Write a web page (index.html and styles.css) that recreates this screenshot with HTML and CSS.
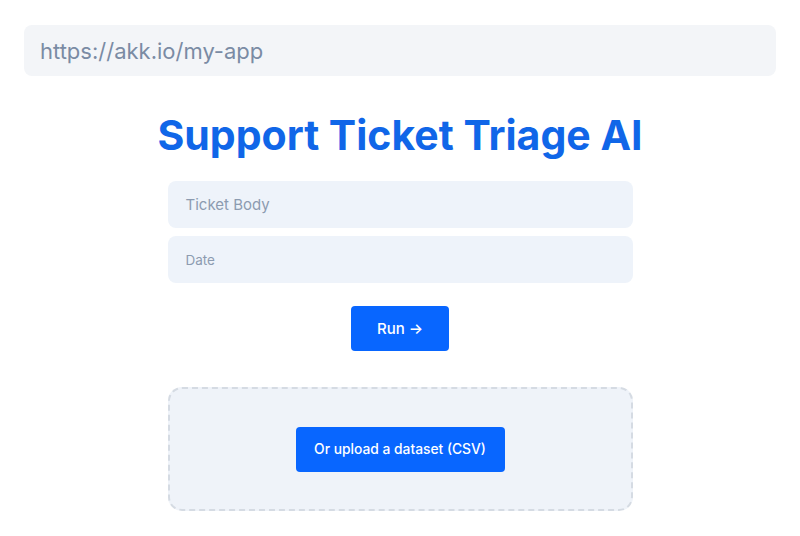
FILE: index.html
```html
<!DOCTYPE html>
<html lang="en">
<head>
<meta charset="utf-8">
<title>Support Ticket Triage AI</title>
<link rel="stylesheet" href="styles.css">
</head>
<body>
  <div class="urlbar">https://akk.io/my-app</div>
  <main class="app">
    <h1 class="title">Support Ticket Triage AI</h1>
    <div class="form">
      <div class="field field-body">Ticket Body</div>
      <div class="field field-date">Date</div>
    </div>
    <button class="btn btn-run">Run →</button>
    <div class="dropzone">
      <button class="btn btn-upload">Or upload a dataset (CSV)</button>
    </div>
  </main>
</body>
</html>
```

FILE: styles.css
```css
* { box-sizing: border-box; }
html, body { margin: 0; padding: 0; background: #ffffff; }
body {
  font-family: Inter, "Noto Sans", sans-serif;
  width: 800px;
  height: 536px;
  overflow: hidden;
  padding-top: 25px;
}
.urlbar {
  margin: 0 24px;
  height: 51px;
  border-radius: 8px;
  background: #f3f5f8;
  color: #7a8ba4;
  font-size: 22px;
  display: flex;
  align-items: center;
  padding-left: 16px;
}
.app {
  width: 465px;
  margin: 0 auto;
  display: flex;
  flex-direction: column;
  align-items: center;
}
.title {
  margin: 35px 0 0;
  height: 70px;
  line-height: 48px;
  font-size: 41px;
  font-weight: 700;
  color: #1066e8;
  white-space: nowrap;
  text-align: center;
}
.form {
  width: 100%;
  display: flex;
  flex-direction: column;
  gap: 8px;
}
.field {
  height: 47px;
  border-radius: 8px;
  background: #eef3fa;
  color: #8c9bb0;
  display: flex;
  align-items: center;
  padding-left: 18px;
}
.field-body { font-size: 15px; }
.field-date { font-size: 13.5px; }
.btn {
  border: none;
  background: #0866ff;
  color: #ffffff;
  font-family: Inter, "Noto Sans", sans-serif;
  font-weight: 500;
  font-size: 15px;
  height: 45px;
  border-radius: 4px;
  display: flex;
  align-items: center;
  justify-content: center;
}
.btn-run {
  width: 98px;
  margin-top: 23px;
}
.dropzone {
  margin-top: 36px;
  width: 100%;
  height: 124px;
  border: 2px dashed #d5dbe3;
  border-radius: 14px;
  background: #eff3f9;
  display: flex;
  align-items: center;
  justify-content: center;
}
.btn-upload {
  width: 209px;
  font-size: 13.8px;
}
```
